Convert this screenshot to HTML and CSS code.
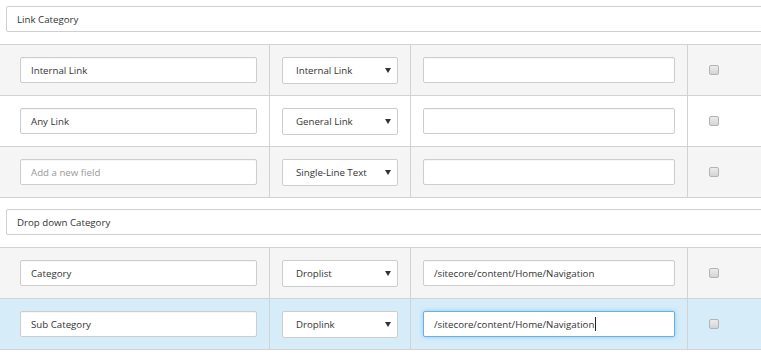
FILE: index.html
```html
<!DOCTYPE html>
<html>
<head>
<meta charset="utf-8">
<link rel="stylesheet" href="styles.css">
</head>
<body>
<div class="page">
  <div class="section">
    <input class="category" type="text" value="Link Category">
    <div class="table">
      <div class="row gray">
        <div class="cell c1"><input class="field" type="text" value="Internal Link"></div>
        <div class="cell c2"><div class="select"><span>Internal Link</span><i class="arrow"></i></div></div>
        <div class="cell c3"><input class="field" type="text" value=""></div>
        <div class="cell c4"><span class="check"></span></div>
      </div>
      <div class="row">
        <div class="cell c1"><input class="field" type="text" value="Any Link"></div>
        <div class="cell c2"><div class="select"><span>General Link</span><i class="arrow"></i></div></div>
        <div class="cell c3"><input class="field" type="text" value=""></div>
        <div class="cell c4"><span class="check"></span></div>
      </div>
      <div class="row gray">
        <div class="cell c1"><input class="field" type="text" placeholder="Add a new field"></div>
        <div class="cell c2"><div class="select"><span>Single-Line Text</span><i class="arrow"></i></div></div>
        <div class="cell c3"><input class="field" type="text" value=""></div>
        <div class="cell c4"><span class="check"></span></div>
      </div>
    </div>
  </div>
  <div class="section">
    <input class="category" type="text" value="Drop down Category">
    <div class="table">
      <div class="row gray">
        <div class="cell c1"><input class="field" type="text" value="Category"></div>
        <div class="cell c2"><div class="select"><span>Droplist</span><i class="arrow"></i></div></div>
        <div class="cell c3"><input class="field" type="text" value="/sitecore/content/Home/Navigation"></div>
        <div class="cell c4"><span class="check"></span></div>
      </div>
      <div class="row blue">
        <div class="cell c1"><input class="field" type="text" value="Sub Category"></div>
        <div class="cell c2"><div class="select"><span>Droplink</span><i class="arrow"></i></div></div>
        <div class="cell c3"><div class="field focus">/sitecore/content/Home/Navigation<span class="caret"></span></div></div>
        <div class="cell c4"><span class="check"></span></div>
      </div>
    </div>
  </div>
</div>
</body>
</html>
```
FILE: styles.css
```css
html, body {
  margin: 0;
  padding: 0;
  background: #fff;
  overflow: hidden;
}
body {
  font-family: "Open Sans", "DejaVu Sans", sans-serif;
  font-size: 9.7px;
  color: #333;
}
.page {
  width: 800px;
  padding-top: 6px;
}
.section {
  display: flex;
  flex-direction: column;
  margin-bottom: 11px;
}
.category {
  box-sizing: border-box;
  margin: 0 0 12px 6px;
  width: 794px;
  height: 26px;
  border: 1px solid #cfcfcf;
  border-radius: 2px;
  padding: 0 10px;
  font: inherit;
  color: #333;
  background: #fff;
  outline: none;
}
.table {
  border-top: 1px solid #d2d2d2;
}
.row {
  display: grid;
  grid-template-columns: 270px 141px 277px 1fr;
  height: 51px;
  box-sizing: border-box;
  border-bottom: 1px solid #d2d2d2;
  background: #fff;
}
.row.gray { background: #f5f5f5; }
.row.blue { background: #d6ecf9; }
.cell {
  display: flex;
  align-items: center;
  border-right: 1px solid #d2d2d2;
  box-sizing: border-box;
}
.cell.c4 { border-right: none; padding-left: 21px; }
.c1 { padding: 0 12px 0 20px; }
.c2 { padding: 0 12px 0 12px; }
.c3 { padding: 0 12px 0 12px; }
.field {
  box-sizing: border-box;
  width: 100%;
  height: 26px;
  border: 1px solid #cdcdcd;
  border-radius: 2px;
  background: #fff;
  padding: 0 10px;
  font: inherit;
  color: #333;
  outline: none;
  box-shadow: inset 0 1px 1px rgba(0,0,0,0.04);
}
.field::placeholder { color: #999; }
div.field {
  display: flex;
  align-items: center;
}
.field.focus {
  border-color: #66afe9;
  box-shadow: 0 0 4px rgba(102,175,233,0.6);
}
.caret {
  display: inline-block;
  width: 1px;
  height: 14px;
  background: #222;
  margin-left: 1px;
}
.select {
  box-sizing: border-box;
  width: 100%;
  height: 27px;
  border: 1px solid #cdcdcd;
  border-radius: 2px;
  background: #fff;
  padding: 0 6px 0 13px;
  display: flex;
  align-items: center;
  justify-content: space-between;
  color: #333;
}
.select span { padding-top: 1px; }
.arrow {
  width: 0;
  height: 0;
  border-left: 3px solid transparent;
  border-right: 3px solid transparent;
  border-top: 5px solid #333;
}
.check {
  width: 10px;
  height: 10px;
  box-sizing: border-box;
  border: 1px solid #b3b3b3;
  border-radius: 2px;
  background: linear-gradient(#ececec, #d4d4d4);
}
```
